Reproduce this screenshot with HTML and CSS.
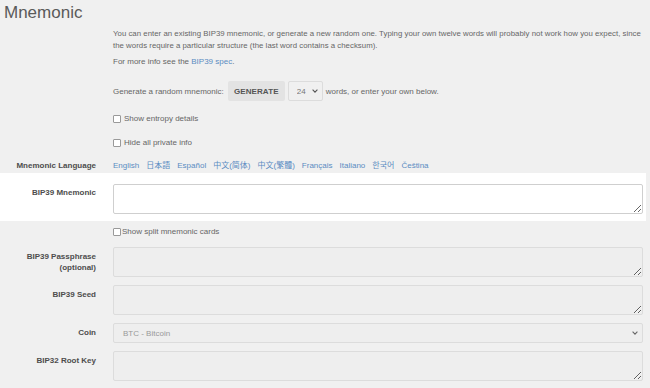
FILE: index.html
```html
<!DOCTYPE html>
<html lang="en">
<head>
<meta charset="utf-8">
<title>Mnemonic</title>
<link rel="stylesheet" href="styles.css">
</head>
<body>
<div class="page">
  <h2 class="title">Mnemonic</h2>

  <div class="row intro">
    <div></div>
    <div>
      <p class="text lead">You can enter an existing BIP39 mnemonic, or generate a new random one. Typing your own twelve words will probably not work how you expect, since the words require a particular structure (the last word contains a checksum).</p>
      <p class="text more">For more info see the <a class="link" href="#">BIP39 spec</a>.</p>
    </div>
  </div>

  <div class="row gen-row">
    <div></div>
    <div class="gen">
      <span class="text">Generate a random mnemonic:</span>
      <button class="btn" type="button">GENERATE</button>
      <span class="select-wrap small">
        <select class="select"><option>24</option></select>
        <svg class="chev" width="6" height="4" viewBox="0 0 6 4"><path d="M0.6 0.7 L3 3.1 L5.4 0.7" fill="none" stroke="#555" stroke-width="1.1"/></svg>
      </span>
      <span class="text">words, or enter your own below.</span>
    </div>
  </div>

  <div class="row check-row entropy">
    <div></div>
    <label class="check"><input type="checkbox" class="cb"><span class="text">Show entropy details</span></label>
  </div>

  <div class="row check-row hide">
    <div></div>
    <label class="check"><input type="checkbox" class="cb"><span class="text">Hide all private info</span></label>
  </div>

  <div class="row lang-row">
    <div class="label">Mnemonic Language</div>
    <div class="langs">
      <a class="link" href="#">English</a>
      <a class="link" href="#" lang="ja">日本語</a>
      <a class="link" href="#">Español</a>
      <a class="link" href="#" lang="zh-CN">中文(简体)</a>
      <a class="link" href="#" lang="zh-TW">中文(繁體)</a>
      <a class="link" href="#">Français</a>
      <a class="link" href="#">Italiano</a>
      <a class="link" href="#" lang="ko">한국어</a>
      <a class="link" href="#">Čeština</a>
    </div>
  </div>

  <div class="band">
    <div class="row">
      <div class="label label-tight">BIP39 Mnemonic</div>
      <textarea class="area area-white"></textarea>
    </div>
  </div>

  <div class="row check-row split">
    <div></div>
    <label class="check tight"><input type="checkbox" class="cb"><span class="text">Show split mnemonic cards</span></label>
  </div>

  <div class="row field passphrase">
    <div class="label">BIP39 Passphrase<br>(optional)</div>
    <textarea class="area"></textarea>
  </div>

  <div class="row field">
    <div class="label">BIP39 Seed</div>
    <textarea class="area"></textarea>
  </div>

  <div class="row field coin">
    <div class="label">Coin</div>
    <span class="select-wrap wide">
      <select class="select select-wide"><option>BTC - Bitcoin</option></select>
      <svg class="chev" width="6" height="4" viewBox="0 0 6 4"><path d="M0.6 0.7 L3 3.1 L5.4 0.7" fill="none" stroke="#666" stroke-width="1.1"/></svg>
    </span>
  </div>

  <div class="row field">
    <div class="label">BIP32 Root Key</div>
    <textarea class="area"></textarea>
  </div>
</div>
</body>
</html>
```

FILE: styles.css
```css
html, body {
  margin: 0;
  padding: 0;
  background: #f0f0f0;
}

body {
  font-family: "Liberation Sans", Arial, "Noto Sans CJK SC", sans-serif;
  font-size: 8px;
  line-height: 11px;
  color: #666;
  overflow: hidden;
}

.page {
  width: 650px;
}

.title {
  margin: 3px 0 0 4px;
  font-size: 17px;
  line-height: 20px;
  font-weight: normal;
  color: #5a5a5a;
}

.row {
  display: grid;
  grid-template-columns: 96px 530px;
  column-gap: 17px;
}

.text {
  margin: 0;
  color: #666;
}

.intro {
  margin-top: 5px;
}

.lead {
  font-size: 7.8px;
  letter-spacing: 0.03px;
  line-height: 11.5px;
}

.more {
  margin-top: 5px;
}

.link {
  color: #5b8cc2;
  text-decoration: none;
}

.gen-row {
  margin-top: 14px;
}

.gen {
  display: flex;
  align-items: center;
  height: 20px;
}

.btn {
  margin: 0 0 0 4px;
  width: 57px;
  height: 20px;
  padding: 0;
  border: none;
  border-radius: 2px;
  background: #e3e3e3;
  color: #555;
  font-family: "Liberation Sans", Arial, sans-serif;
  font-size: 8px;
  font-weight: bold;
  letter-spacing: 0.1px;
}

.select-wrap {
  position: relative;
  display: inline-block;
}

.select-wrap.small {
  margin: 0 3px 0 3px;
  width: 35px;
  height: 20px;
}

.select-wrap.wide {
  width: 530px;
  height: 20px;
}

.select {
  appearance: none;
  -webkit-appearance: none;
  box-sizing: border-box;
  width: 100%;
  height: 100%;
  margin: 0;
  padding: 0 0 0 8px;
  border: 1px solid #dcdcdc;
  border-radius: 2px;
  background: #f0f0f0;
  color: #777;
  font-family: "Liberation Sans", Arial, sans-serif;
  font-size: 8px;
}

.select-wide {
  padding-left: 9px;
  color: #999;
  background: #eeeeee;
}

.chev {
  position: absolute;
  right: 5px;
  top: 8px;
  pointer-events: none;
}

.check-row .check {
  display: flex;
  align-items: center;
  gap: 3px;
  height: 11px;
}

.check.tight {
  gap: 1px;
}

.cb {
  appearance: none;
  -webkit-appearance: none;
  box-sizing: border-box;
  width: 8px;
  height: 8px;
  margin: 0;
  border: 1px solid #999;
  border-radius: 1px;
  background: #fff;
}

.entropy {
  margin-top: 12px;
}

.hide {
  margin-top: 13px;
}

.lang-row {
  margin-top: 12px;
}

.langs {
  display: flex;
  gap: 7px;
  height: 11px;
  white-space: nowrap;
}

.langs .link {
  font-family: "Liberation Sans", Arial, "Noto Sans CJK SC", sans-serif;
}

.langs .link:lang(ja) {
  font-family: "Liberation Sans", "Noto Sans CJK JP", sans-serif;
}

.langs .link:lang(zh-TW) {
  font-family: "Liberation Sans", "Noto Sans CJK TC", sans-serif;
}

.langs .link:lang(ko) {
  font-family: "Liberation Sans", "Noto Sans CJK KR", sans-serif;
}

.label {
  text-align: right;
  font-weight: bold;
  color: #4d4d4d;
  padding-top: 4px;
}

.lang-row .label {
  padding-top: 0;
}

.label-tight {
  padding-top: 3px;
}

.band {
  margin-top: 2px;
  width: 646px;
  padding: 11px 0 7px 0;
  background: #fff;
}

.area {
  box-sizing: border-box;
  display: block;
  width: 530px;
  height: 30px;
  margin: 0;
  padding: 4px 8px;
  border: 1px solid #dcdcdc;
  border-radius: 2px;
  background: #eeeeee;
  font-family: "Liberation Sans", Arial, sans-serif;
  font-size: 8px;
  resize: vertical;
}

.area-white {
  background: #fff;
  border-color: #cfcfcf;
}

.split {
  margin-top: 5px;
}

.field {
  margin-top: 8px;
}

.passphrase {
  margin-top: 10px;
}

.coin .label {
  padding-top: 4px;
}
```
